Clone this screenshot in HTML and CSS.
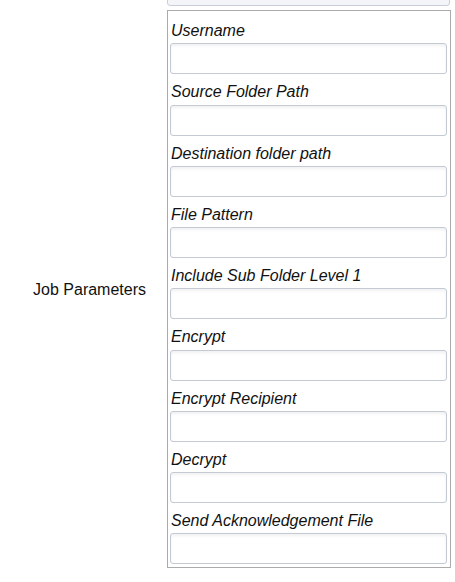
FILE: index.html
```html
<!DOCTYPE html>
<html lang="en">
<head>
  <meta charset="UTF-8">
  <title>Job Parameters</title>
  <link rel="stylesheet" href="styles.css">
</head>
<body>
  <div class="prev-field"></div>

  <div class="form-row">
    <div class="row-label">Job Parameters</div>
    <div class="param-box">
      <div class="param">
        <label>Username</label>
        <input type="text">
      </div>
      <div class="param">
        <label>Source Folder Path</label>
        <input type="text">
      </div>
      <div class="param">
        <label>Destination folder path</label>
        <input type="text">
      </div>
      <div class="param">
        <label>File Pattern</label>
        <input type="text">
      </div>
      <div class="param">
        <label>Include Sub Folder Level 1</label>
        <input type="text">
      </div>
      <div class="param">
        <label>Encrypt</label>
        <input type="text">
      </div>
      <div class="param">
        <label>Encrypt Recipient</label>
        <input type="text">
      </div>
      <div class="param">
        <label>Decrypt</label>
        <input type="text">
      </div>
      <div class="param">
        <label>Send Acknowledgement File</label>
        <input type="text">
      </div>
    </div>
  </div>
</body>
</html>
```

FILE: styles.css
```css
* { box-sizing: border-box; }

body {
  margin: 0;
  font-family: "Liberation Sans", Arial, sans-serif;
  font-size: 16px;
  color: #111;
  background: #fff;
}

.prev-field {
  margin: -20px 0 4px 167px;
  width: 283px;
  height: 26px;
  background: #f3f5f8;
  border: 1px solid #c9cfd8;
  border-radius: 3px;
}

.form-row {
  display: flex;
  align-items: center;
}

.row-label {
  width: 167px;
  padding-right: 21px;
  text-align: right;
  padding-top: 2px;
}

.param-box {
  width: 284px;
  border: 1px solid #ababab;
  padding: 2px 3px 3px 2px;
}

.param label {
  display: block;
  font-style: italic;
  line-height: 18px;
  padding: 9px 0 0 1px;
  height: 30.25px;
}

.param input {
  display: block;
  width: 277px;
  height: 31px;
  margin: 0;
  border: 1px solid #c3cad4;
  border-radius: 3px;
  background: #fff;
  box-shadow: inset 0 2px 3px rgba(0, 0, 0, 0.06);
  font: inherit;
}
```
